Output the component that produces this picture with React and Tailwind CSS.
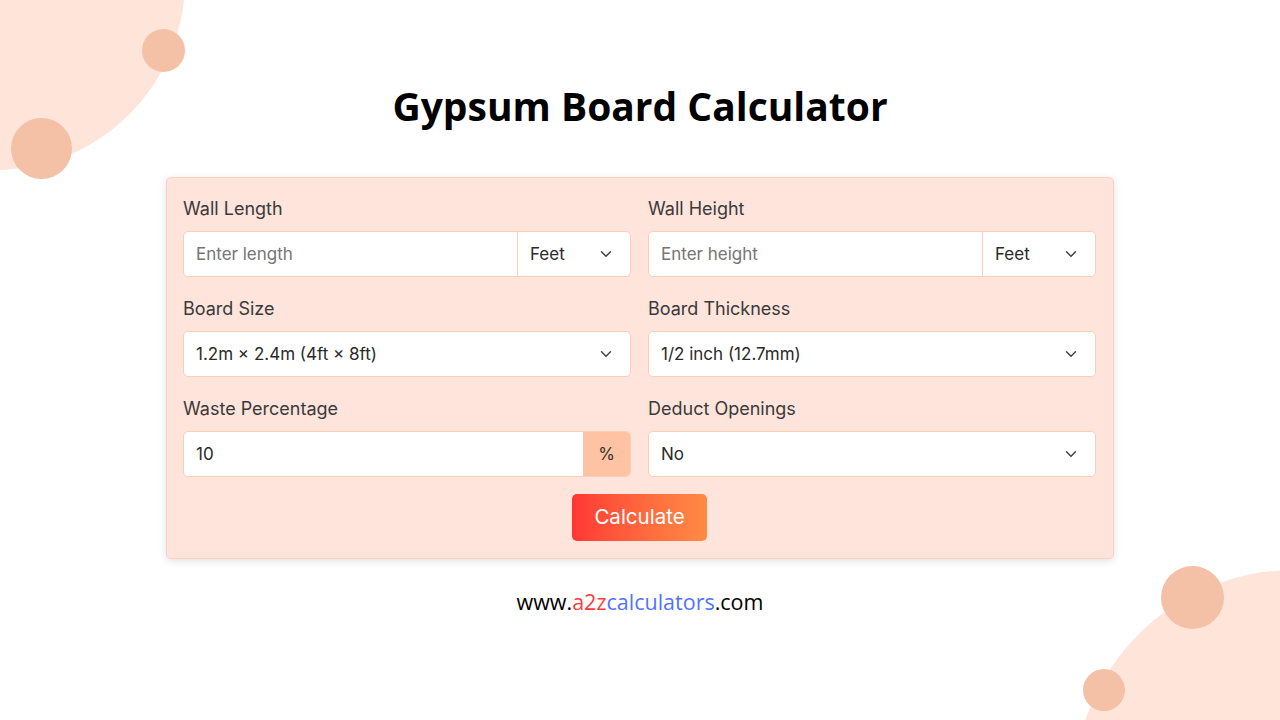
import React from "react";

const Chevron = () => (
  <svg width="18" height="18" viewBox="0 0 24 24" fill="none" stroke="#444" strokeWidth="2" strokeLinecap="round" strokeLinejoin="round">
    <path d="M6 9l6 6 6-6" />
  </svg>
);

const Label = ({ children }) => (
  <div className="text-[18px] leading-[27px] text-[#3a3a3a] mb-[9px]">{children}</div>
);

const box = "h-[46px] bg-white border border-[#fdcdb8] rounded-[5px] flex items-center";

const InputWithUnit = ({ placeholder }) => (
  <div className={box}>
    <div className="flex-1 px-3 pt-[1px] text-[17px] text-[#757575]">{placeholder}</div>
    <div className="w-[113px] h-full border-l border-[#fdcdb8] flex items-center justify-between pl-3 pr-[15px] text-[17px] text-[#2a2a2a]">
      <span className="pt-[1px]">Feet</span>
      <Chevron />
    </div>
  </div>
);

const Select = ({ value }) => (
  <div className={box + " justify-between pl-3 pr-[15px]"}>
    <span className="pt-[1px] text-[17px] text-[#2a2a2a]">{value}</span>
    <Chevron />
  </div>
);

export default function App() {
  return (
    <div className="relative w-[1280px] h-[720px] overflow-hidden bg-white" style={{ fontFamily: "Inter, 'Noto Sans', sans-serif" }}>
      {/* decorations */}
      <div className="absolute left-[-195px] top-[-210px] w-[380px] h-[380px] rounded-full bg-[#ffe4da]" />
      <div className="absolute left-[142px] top-[29px] w-[43px] h-[43px] rounded-full bg-[#f4c0a6]" />
      <div className="absolute left-[11px] top-[118px] w-[61px] h-[61px] rounded-full bg-[#f4c0a6]" />
      <div className="absolute left-[1074px] top-[570px] w-[440px] h-[440px] rounded-full bg-[#ffe4da]" />
      <div className="absolute left-[1161px] top-[566px] w-[63px] h-[63px] rounded-full bg-[#f4c0a6]" />
      <div className="absolute left-[1083px] top-[669px] w-[42px] h-[42px] rounded-full bg-[#f4c0a6]" />

      <div className="relative flex flex-col items-center">
        <h1 className="mt-[80px] h-[52px] leading-[52px] text-[39px] font-bold text-black" style={{ fontFamily: "'Open Sans', sans-serif" }}>
          Gypsum Board Calculator
        </h1>

        <div className="mt-[45px] w-[948px] bg-[#ffe4dc] border border-[#fcd0bd] rounded-[5px] shadow-[0_2px_8px_rgba(0,0,0,0.12)] pt-[17px] pb-[17px] pl-[16px] pr-[17px]">
          <div className="grid grid-cols-2 gap-x-[17px] gap-y-[18px]">
            <div>
              <Label>Wall Length</Label>
              <InputWithUnit placeholder="Enter length" />
            </div>
            <div>
              <Label>Wall Height</Label>
              <InputWithUnit placeholder="Enter height" />
            </div>
            <div>
              <Label>Board Size</Label>
              <Select value="1.2m × 2.4m (4ft × 8ft)" />
            </div>
            <div>
              <Label>Board Thickness</Label>
              <Select value="1/2 inch (12.7mm)" />
            </div>
            <div>
              <Label>Waste Percentage</Label>
              <div className={box + " overflow-hidden"}>
                <div className="flex-1 px-3 pt-[1px] text-[17px] text-[#2a2a2a]">10</div>
                <div className="w-[47px] h-full bg-[#ffc3a3] flex items-center justify-center pt-[1px] text-[17px] text-[#333]">%</div>
              </div>
            </div>
            <div>
              <Label>Deduct Openings</Label>
              <Select value="No" />
            </div>
          </div>
          <div className="flex justify-center mt-[17px]">
            <div className="w-[135px] h-[47px] rounded-[5px] bg-gradient-to-r from-[#ff3535] to-[#ff8a45] text-white text-[20.5px] flex items-center justify-center">
              Calculate
            </div>
          </div>
        </div>

        <div className="mt-[27px] text-[21.5px] text-black" style={{ fontFamily: "'Open Sans', sans-serif" }}>
          www.<span className="text-[#ff3b3b]">a2z</span><span className="text-[#5271ff]">calculators</span>.com
        </div>
      </div>
    </div>
  );
}
